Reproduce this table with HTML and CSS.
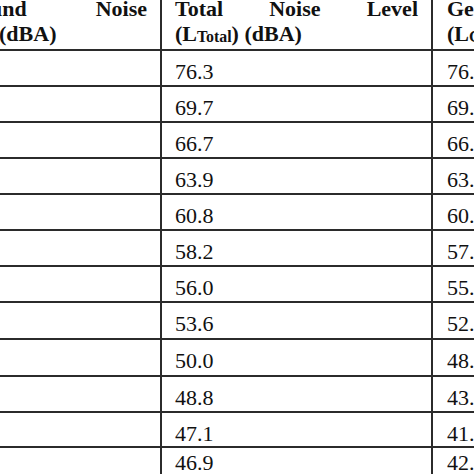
FILE: index.html
```html
<!DOCTYPE html>
<html>
<head>
<meta charset="utf-8">
<link rel="stylesheet" href="styles.css">
</head>
<body>
<div class="table">
  <div class="row head">
    <div class="cell c1"><div class="just"><span>Background</span><span>Noise</span></div><div>(L<sub class="tiny">Background</sub>) (dBA)</div></div>
    <div class="cell c2"><div class="just"><span>Total</span><span>Noise</span><span>Level</span></div><div>(L<sub>Total</sub>) (dBA)</div></div>
    <div class="cell c3"><div class="just"><span>Geometric</span><span>Mean</span></div><div>(L<sub>Geo</sub>) (dBA)</div></div>
  </div>
  <div class="row"><div class="cell c1">45.2</div><div class="cell c2">76.3</div><div class="cell c3">76.0</div></div>
  <div class="row"><div class="cell c1">45.2</div><div class="cell c2">69.7</div><div class="cell c3">69.2</div></div>
  <div class="row"><div class="cell c1">45.2</div><div class="cell c2">66.7</div><div class="cell c3">66.1</div></div>
  <div class="row"><div class="cell c1">45.2</div><div class="cell c2">63.9</div><div class="cell c3">63.4</div></div>
  <div class="row"><div class="cell c1">45.2</div><div class="cell c2">60.8</div><div class="cell c3">60.2</div></div>
  <div class="row"><div class="cell c1">45.2</div><div class="cell c2">58.2</div><div class="cell c3">57.6</div></div>
  <div class="row"><div class="cell c1">45.2</div><div class="cell c2">56.0</div><div class="cell c3">55.3</div></div>
  <div class="row tall"><div class="cell c1">45.2</div><div class="cell c2">53.6</div><div class="cell c3">52.7</div></div>
  <div class="row tall"><div class="cell c1">45.2</div><div class="cell c2">50.0</div><div class="cell c3">48.6</div></div>
  <div class="row"><div class="cell c1">45.2</div><div class="cell c2">48.8</div><div class="cell c3">43.9</div></div>
  <div class="row short"><div class="cell c1">45.2</div><div class="cell c2">47.1</div><div class="cell c3">41.5</div></div>
  <div class="row last"><div class="cell c1">45.2</div><div class="cell c2">46.9</div><div class="cell c3">42.8</div></div>
</div>
</body>
</html>
```
FILE: styles.css
```css
html, body {
  margin: 0;
  padding: 0;
  overflow: hidden;
  background: #fff;
}
body {
  font-family: "Liberation Serif", "Times New Roman", serif;
  font-size: 22px;
  color: #111;
}
.table {
  margin: -4px 0 0 -103px;
  width: 700px;
}
.row {
  display: grid;
  grid-template-columns: 265px 271px 1fr;
  border-bottom: 2px solid #2b2b2b;
  box-sizing: border-box;
  height: 36px;
}
.row.tall { height: 37px; }
.row.short { height: 35px; }
.row.last { height: 40px; border-bottom: none; }
.row.last .cell { padding-top: 2px; }
.cell {
  padding: 8px 13px 0 14px;
  line-height: 26px;
  white-space: nowrap;
  box-sizing: border-box;
}
.c2 { padding-left: 13px; }
.c3 { padding-left: 14px; }
.c1, .c2 { border-right: 2px solid #2b2b2b; }
.head { height: auto; font-weight: bold; }
.head .cell {
  padding-top: 0;
  padding-bottom: 3px;
  line-height: 25px;
}
.just {
  display: flex;
  justify-content: space-between;
}
.c3 .just { justify-content: flex-start; gap: 12px; }
sub {
  font-size: 0.72em;
  vertical-align: -1px;
  line-height: 0;
}
sub.tiny { font-size: 0.46em; }
```
